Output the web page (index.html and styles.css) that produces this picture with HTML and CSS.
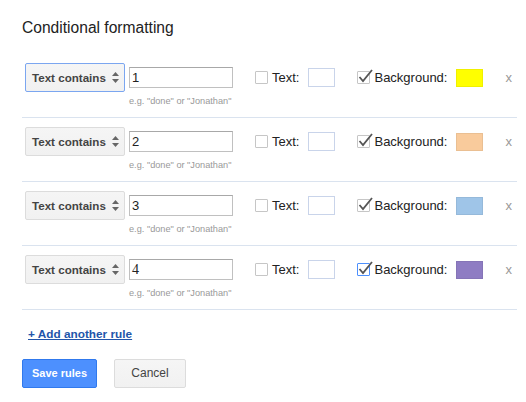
FILE: index.html
```html
<!DOCTYPE html>
<html>
<head>
<meta charset="utf-8">
<link rel="stylesheet" href="styles.css">
</head>
<body>
<div class="dialog">
  <h1 class="title">Conditional formatting</h1>
  <div class="rules">
    <div class="rule">
      <div class="line">
        <div class="select focused"><span>Text contains</span><svg class="arrows" width="7" height="11" viewBox="0 0 7 11"><path d="M3.5 0 L7 4 L0 4 Z M0 7 L7 7 L3.5 11 Z"/></svg></div>
        <div class="value">1</div>
        <span class="cb"></span><span class="lbl">Text:</span><span class="cbox"></span>
        <span class="cb checked"><svg class="tick" width="17" height="17" viewBox="0 0 17 17"><path d="M2.5 9 L6 13 L15 2"/></svg></span><span class="lbl">Background:</span><span class="swatch" style="background:#ffff00"></span>
        <span class="remove">x</span>
      </div>
      <div class="hint">e.g. "done" or "Jonathan"</div>
    </div>
    <div class="rule">
      <div class="line">
        <div class="select"><span>Text contains</span><svg class="arrows" width="7" height="11" viewBox="0 0 7 11"><path d="M3.5 0 L7 4 L0 4 Z M0 7 L7 7 L3.5 11 Z"/></svg></div>
        <div class="value">2</div>
        <span class="cb"></span><span class="lbl">Text:</span><span class="cbox"></span>
        <span class="cb checked"><svg class="tick" width="17" height="17" viewBox="0 0 17 17"><path d="M2.5 9 L6 13 L15 2"/></svg></span><span class="lbl">Background:</span><span class="swatch" style="background:#f9cb9c"></span>
        <span class="remove">x</span>
      </div>
      <div class="hint">e.g. "done" or "Jonathan"</div>
    </div>
    <div class="rule">
      <div class="line">
        <div class="select"><span>Text contains</span><svg class="arrows" width="7" height="11" viewBox="0 0 7 11"><path d="M3.5 0 L7 4 L0 4 Z M0 7 L7 7 L3.5 11 Z"/></svg></div>
        <div class="value">3</div>
        <span class="cb"></span><span class="lbl">Text:</span><span class="cbox"></span>
        <span class="cb checked"><svg class="tick" width="17" height="17" viewBox="0 0 17 17"><path d="M2.5 9 L6 13 L15 2"/></svg></span><span class="lbl">Background:</span><span class="swatch" style="background:#9fc5e8"></span>
        <span class="remove">x</span>
      </div>
      <div class="hint">e.g. "done" or "Jonathan"</div>
    </div>
    <div class="rule">
      <div class="line">
        <div class="select"><span>Text contains</span><svg class="arrows" width="7" height="11" viewBox="0 0 7 11"><path d="M3.5 0 L7 4 L0 4 Z M0 7 L7 7 L3.5 11 Z"/></svg></div>
        <div class="value serif">4</div>
        <span class="cb"></span><span class="lbl">Text:</span><span class="cbox"></span>
        <span class="cb checked focused"><svg class="tick" width="17" height="17" viewBox="0 0 17 17"><path d="M2.5 9 L6 13 L15 2"/></svg></span><span class="lbl">Background:</span><span class="swatch" style="background:#8e7cc3"></span>
        <span class="remove">x</span>
      </div>
      <div class="hint">e.g. "done" or "Jonathan"</div>
    </div>
  </div>
  <div class="add"><a class="add-link">+ Add another rule</a></div>
  <div class="buttons">
    <div class="btn primary">Save rules</div>
    <div class="btn">Cancel</div>
  </div>
</div>
</body>
</html>
```
FILE: styles.css
```css
html, body {
  margin: 0;
  padding: 0;
  background: #fff;
}
body {
  font-family: "Liberation Sans", Arial, sans-serif;
  color: #222;
}
.dialog {
  width: 495px;
  padding: 18px 0 0 22px;
}
.title {
  margin: 0 0 16px 0;
  font-size: 15.6px;
  font-weight: normal;
  line-height: 20px;
  color: #222;
}
.rule {
  height: 64px;
  box-sizing: border-box;
  padding: 9px 0 0 3px;
  border-bottom: 1px solid #dae3ef;
}
.line {
  display: flex;
  align-items: center;
  height: 29px;
}
.select {
  box-sizing: border-box;
  width: 100px;
  height: 29px;
  display: flex;
  align-items: center;
  padding-left: 6px;
  border: 1px solid #dcdcdc;
  border-radius: 2px;
  background: linear-gradient(#f5f5f5, #f1f1f1);
  font-size: 11.6px;
  font-weight: bold;
  color: #444;
}
.select.focused {
  border-color: #7ba6f0;
}
.arrows {
  margin-left: 6px;
  fill: #666;
}
.value {
  box-sizing: border-box;
  width: 104px;
  height: 21px;
  margin-left: 4px;
  border: 1px solid #c0c0c0;
  border-top-color: #a8a8a8;
  padding-left: 2px;
  font-size: 13px;
  line-height: 19px;
  color: #222;
}
.value.serif {
  font-family: "Liberation Serif", "Times New Roman", serif;
  font-size: 14px;
}
.cb {
  position: relative;
  box-sizing: border-box;
  width: 13px;
  height: 13px;
  margin-left: 22px;
  border: 1px solid #c6c6c6;
  border-radius: 1px;
  background: #fff;
  flex: none;
}
.cb.focused {
  border-color: #4d90fe;
}
.tick {
  position: absolute;
  left: -1px;
  top: -4px;
  fill: none;
  stroke: #555;
  stroke-width: 1.8;
}
.lbl {
  margin-left: 4px;
  font-size: 13px;
  color: #222;
}
.cbox {
  box-sizing: border-box;
  width: 27px;
  height: 19px;
  margin-left: 9px;
  border: 1px solid #c9d4ea;
  background: #fff;
}
.swatch {
  box-sizing: border-box;
  width: 27px;
  height: 18px;
  margin-left: 9px;
  border: 1px solid rgba(0,0,0,0.06);
}
.remove {
  margin-left: 22px;
  font-size: 13px;
  color: #999;
}
.hint {
  margin: 3px 0 0 104px;
  font-size: 9.2px;
  line-height: 12px;
  color: #999;
}
.add {
  margin-top: 16px;
  padding-left: 6px;
  line-height: 14px;
}
.add-link {
  font-size: 11.8px;
  font-weight: bold;
  color: #2255aa;
  text-decoration: underline;
}
.buttons {
  display: flex;
  margin-top: 18px;
}
.btn {
  box-sizing: border-box;
  height: 29px;
  width: 72px;
  margin-left: 17px;
  border: 1px solid #dcdcdc;
  border-radius: 2px;
  background: linear-gradient(#f5f5f5, #f1f1f1);
  color: #444;
  font-size: 12px;
  line-height: 27px;
  text-align: center;
}
.btn.primary {
  width: 75px;
  margin-left: 0;
  border-color: #3079ed;
  background: #4d90fe;
  color: #fff;
  font-size: 11px;
  font-weight: bold;
}
```
